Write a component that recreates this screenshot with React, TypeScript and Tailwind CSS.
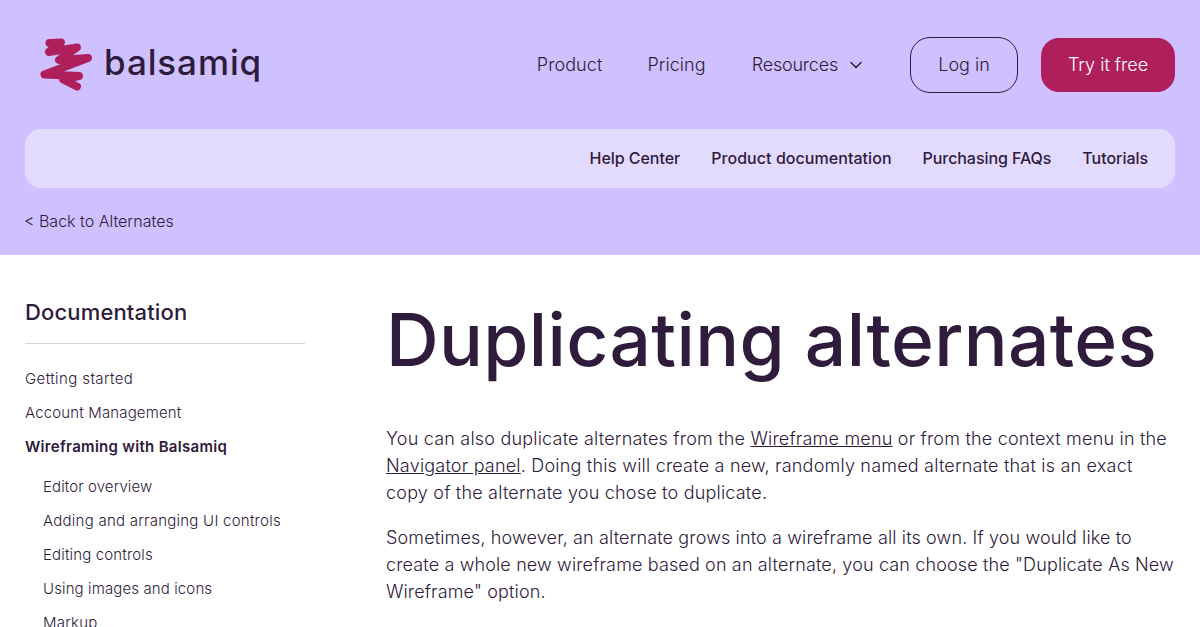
import { ChevronDown } from "lucide-react";

const font = { fontFamily: "Inter, 'Noto Sans', sans-serif" };

function Logo() {
  return (
    <div className="flex items-center">
      <svg width="60" height="60" viewBox="0 0 60 60" className="shrink-0">
        <path
          d="M14.5 8 L26 7.5 L14 17 L42 12.5 L24 25 L53 23 L9.5 39.5 L44 41 L28 44.5 L42 51.5"
          fill="none"
          stroke="#ae1f5b"
          strokeWidth="8"
          strokeLinejoin="round"
          strokeLinecap="round"
        />
      </svg>
      <span className="mb-[5px] ml-[9px] text-[35px] font-medium leading-none tracking-[0.9px] text-[#2f1b3b]">balsamiq</span>
    </div>
  );
}

const side = [
  { t: "Editor overview", c: "tracking-[0.1px]" },
  { t: "Adding and arranging UI controls", c: "tracking-[0.25px]" },
  { t: "Editing controls", c: "tracking-[0.15px]" },
  { t: "Using images and icons", c: "tracking-[0.12px]" },
  { t: "Markup", c: "tracking-[0.25px]" },
];

export default function App() {
  return (
    <div style={font} className="h-[627px] w-[1200px] overflow-hidden bg-white text-[#2f1b3b]">
      <header className="h-[255px] bg-[#cfc0ff] px-[25px] pt-[37px]">
        <div className="flex h-[56px] items-center justify-between">
          <div className="pl-[10px]"><Logo /></div>
          <nav className="flex items-center text-[18px] font-light leading-[26px]">
            <a className="mr-[45px] tracking-[0.1px]">Product</a>
            <a className="mr-[46px] tracking-[0.05px]">Pricing</a>
            <a className="flex items-center tracking-[-0.2px]">Resources<ChevronDown className="ml-[8px] mr-[44px]" size={20} strokeWidth={1.75} /></a>
            <a className="flex h-[56px] w-[108px] items-center justify-center rounded-[20px] border border-[#2f1b3b]">Log in</a>
            <a className="ml-[23px] flex h-[54px] w-[134px] items-center justify-center rounded-[18px] bg-[#ae1f5b] text-white">Try it free</a>
          </nav>
        </div>
        <div className="mt-[36px] flex h-[59px] items-center justify-end gap-[31px] rounded-[16px] bg-[#e3daff] pb-[2px] pr-[27px] text-[16px] font-medium">
          <a className="tracking-[-0.04px]">Help Center</a>
          <a className="tracking-[0.05px]">Product documentation</a>
          <a className="tracking-[-0.07px]">Purchasing FAQs</a>
          <a className="tracking-[-0.04px]">Tutorials</a>
        </div>
        <div className="ml-[-1px] mt-[21px] text-[16px] font-light leading-[24px]">&lt; Back to Alternates</div>
      </header>
      <main className="flex px-[25px]">
        <aside className="w-[280px] shrink-0 pt-[42px]">
          <h2 className="border-b border-[#d5d2d8] pb-[16px] text-[22px] font-medium leading-[30px] tracking-[0.15px]">Documentation</h2>
          <ul className="mt-[18px] text-[15px] font-light leading-[34px]">
            <li className="tracking-[0.4px]">Getting started</li>
            <li className="tracking-[0.15px]">Account Management</li>
            <li className="font-semibold tracking-[0.3px]">Wireframing with Balsamiq</li>
          </ul>
          <ul className="mt-[6px] pl-[18px] text-[15px] font-light leading-[34px]">
            {side.map((s) => <li key={s.t} className={s.c}>{s.t}</li>)}
          </ul>
        </aside>
        <article className="ml-[81px] w-[792px] shrink-0 pt-[45px]">
          <h1 className="whitespace-nowrap text-[73px] font-medium leading-[80px] tracking-[0.35px]">Duplicating alternates</h1>
          <p className="mt-[45px] text-[18px] font-light leading-[27px] tracking-[0.2px]">
            You can also duplicate alternates from the <a className="underline">Wireframe menu</a> or from the context menu in the <a className="underline">Navigator panel</a>. Doing this will create a new, randomly named alternate that is an exact copy of the alternate you chose to duplicate.
          </p>
          <p className="mt-[18px] text-[18px] font-light leading-[27px] tracking-[0.14px]">
            Sometimes, however, an alternate grows into a wireframe all its own. If you would like to create a whole new wireframe based on an alternate, you can choose the "Duplicate As New Wireframe" option.
          </p>
        </article>
      </main>
    </div>
  );
}
